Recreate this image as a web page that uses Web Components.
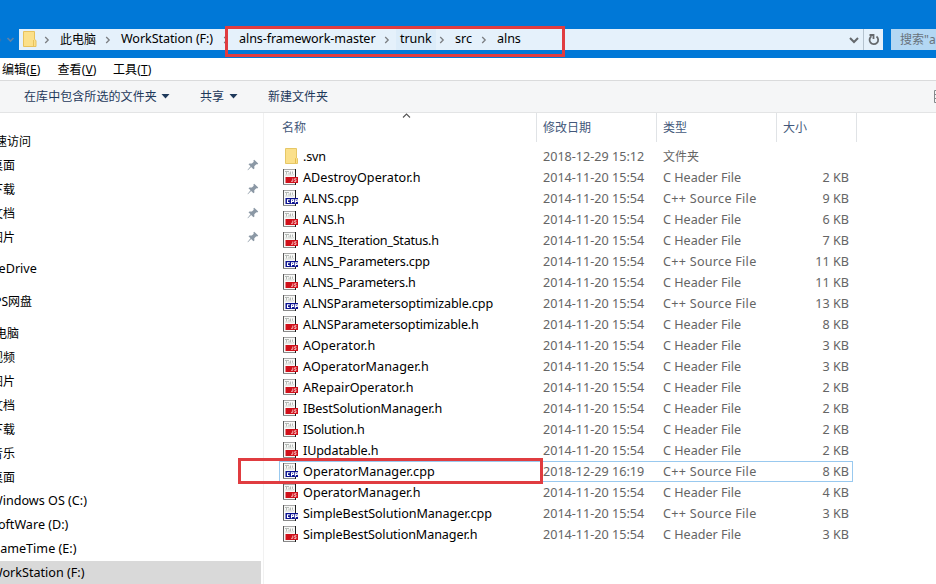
<!DOCTYPE html>
<html lang="zh-CN">
<head>
<meta charset="utf-8">
<title>alns</title>
<style>
  body {
    margin: 0;
    overflow: hidden;
    background: #fff;
    font-family: "Noto Sans", "Noto Sans CJK SC", sans-serif;
    font-size: 12px;
    color: #000;
  }
</style>
</head>
<body>
<explorer-window></explorer-window>

<script>
  // components/AddressBar.js
  class AddressBar extends HTMLElement {
    constructor() {
      super();
      this.attachShadow({ mode: "open" });
    }

    connectedCallback() {
      // [label, cell width up to the next chevron, style class]
      const crumbs = [
        ["此电脑", 61, "cjk"],
        ["WorkStation (F:)", 118, "tight"],
        ["alns-framework-master", 161, "tight"],
        ["trunk", 55, "tight hot"],
        ["src", 42, ""],
        ["alns", 60, "tight"],
      ];
      const chevron = `<svg class="chev" width="6" height="8" viewBox="0 0 6 8"><path d="M1.2 1 4.2 4 1.2 7" fill="none" stroke="#7b7e82" stroke-width="1.3"/></svg>`;

      this.shadowRoot.innerHTML = `
        <style>
          :host {
            display: flex;
            height: 58px;
            box-sizing: border-box;
            padding-top: 29px;
            background: #0078d7;
            font-size: 12.6px;
            line-height: 20px;
            white-space: nowrap;
          }
          .recent { width: 19px; height: 21px; flex: none; }
          .bar {
            display: flex;
            width: 864px;
            height: 21px;
            flex: none;
            background: #e5f1fb;
          }
          .folder { width: 25px; flex: none; padding-left: 4px; box-sizing: border-box; }
          .crumb { display: flex; flex: none; }
          .chev { margin: 7px 10px 0 0; flex: none; }
          .cjk { font-size: 12px; line-height: 21px; }
          .tight { letter-spacing: -0.09px; }
          .hot { background: #dcecf9; box-shadow: -4px 0 #dcecf9, 4px 0 #dcecf9; height: 21px; }
          .spacer { flex: 1; }
          .drop { width: 19px; }
          .refresh { width: 19px; border-left: 1px solid #b5c3cf; }
          .search {
            flex: 1;
            height: 21px;
            margin-left: 8px;
            padding-left: 9px;
            background: #b3d7f3;
            color: #68727b;
            font-size: 12px;
            line-height: 21px;
            overflow: hidden;
          }
          svg { display: block; }
        </style>
        <svg class="recent" viewBox="0 0 19 21"><path d="M0 9v4l1.5-2z" fill="#2d73b5"/><path d="M7.5 9 10.5 12 13.5 9" fill="none" stroke="#5f83a8" stroke-width="1.6"/></svg>
        <div class="bar">
          <div class="folder">
            <svg width="14" height="20" viewBox="0 0 14 20"><path d="M.5 2.500h11v8l1.500 1v6H.5z" fill="#fbe08a" stroke="#e8c25c"/><path d="M10.500 17v-6" stroke="#e8c25c"/></svg>
          </div>
          ${crumbs
            .map(
              ([label, width, kind]) =>
                `<div class="crumb" style="width:${width}px">${chevron}<span class="${kind}">${label}</span></div>`
            )
            .join("")}
          <div class="spacer"></div>
          <svg class="drop" height="21" viewBox="0 0 19 21"><path d="M6 9 10 13 14 9" fill="none" stroke="#65696d" stroke-width="2"/></svg>
          <svg class="refresh" height="21" viewBox="0 0 19 21"><path d="M7.500 7.300A4.300 4.300 0 1 0 12.500 7.500M5.500 6h4v4" fill="none" stroke="#65696d" stroke-width="1.800"/></svg>
        </div>
        <div class="search">搜索"alns"</div>
      `;
    }
  }

  // components/MenuBar.js
  class MenuBar extends HTMLElement {
    constructor() {
      super();
      this.attachShadow({ mode: "open" });
    }

    connectedCallback() {
      this.shadowRoot.innerHTML = `
        <style>
          :host {
            display: flex;
            height: 22px;
            padding-left: 2px;
            border-bottom: 1px solid #dadbdc;
            line-height: 24px;
          }
          div { width: 55.5px; white-space: nowrap; letter-spacing: 0.1px; }
        </style>
        <div>编辑(<u>E</u>)</div>
        <div>查看(<u>V</u>)</div>
        <div>工具(<u>T</u>)</div>
      `;
    }
  }

  // components/CommandBar.js
  class CommandBar extends HTMLElement {
    constructor() {
      super();
      this.attachShadow({ mode: "open" });
    }

    connectedCallback() {
      const arrow = `<svg width="9" height="5" viewBox="0 0 9 5"><path d="M.5 0h8L4.500 4.500z" fill="#1e395b"/></svg>`;

      this.shadowRoot.innerHTML = `
        <style>
          :host {
            display: flex;
            align-items: center;
            height: 31px;
            padding-left: 24px;
            background: #f5f6f7;
            border-bottom: 1px solid #e3e4e5;
            color: #1e395b;
            line-height: 32px;
            white-space: nowrap;
          }
          div { display: flex; align-items: center; gap: 4px; height: 31px; }
          .library { width: 176px; letter-spacing: 0.07px; }
          .share { width: 68px; gap: 5px; }
          .view { margin-left: auto; width: 2px; }
        </style>
        <div class="library">在库中包含所选的文件夹${arrow}</div>
        <div class="share">共享${arrow}</div>
        <div>新建文件夹</div>
        <svg class="view" height="14" viewBox="0 0 2 14"><path d="M2 .5H.5v12H2M0 4.500h2M0 8.500h2" fill="none" stroke="#85888b"/></svg>
      `;
    }
  }

  // components/NavItem.js
  class NavItem extends HTMLElement {
    constructor() {
      super();
      this.attachShadow({ mode: "open" });
    }

    connectedCallback() {
      const pin = `<svg width="12" height="12" viewBox="0 0 12 12"><path d="M7.200.8 11.200 4.600 10.200 5.500 9.300 5.200 7.300 7.200 7.400 9.500 6.500 10.300 4.100 8 .9 11.300.5 11 3.500 7.300 1.500 5.200 2.500 4.400 4.900 4.600 6.800 2.700 6.300 1.700z" fill="#8b98a5"/></svg>`;

      this.shadowRoot.innerHTML = `
        <style>
          :host {
            display: flex;
            justify-content: space-between;
            align-items: center;
            width: 261px;
            height: 24px;
            box-sizing: border-box;
            padding-right: 2px;
            white-space: nowrap;
            line-height: 25px;
          }
          :host([selected]) { background: #d9d9d9; }
          :host([gap]) { margin-top: 8px; }
          :host([latin]) { font-size: 12.6px; line-height: 24px; }
          .label { margin-left: -17px; height: 24px; }
          :host([latin]) .label { margin-left: -19px; }
          :host([child]) .label { margin-left: -9px; }
        </style>
        <span class="label"><slot></slot></span>
        ${this.hasAttribute("pinned") ? pin : ""}
      `;
    }
  }

  // components/NavPane.js
  class NavPane extends HTMLElement {
    constructor() {
      super();
      this.attachShadow({ mode: "open" });
    }

    connectedCallback() {
      this.shadowRoot.innerHTML = `
        <style>
          :host {
            display: block;
            width: 263px;
            flex: none;
            padding-top: 16px;
            border-right: 1px solid #f1f1f1;
            overflow: hidden;
          }
        </style>
        <nav-item>快速访问</nav-item>
        <nav-item child pinned>桌面</nav-item>
        <nav-item child pinned>下载</nav-item>
        <nav-item child pinned>文档</nav-item>
        <nav-item child pinned>图片</nav-item>
        <nav-item gap latin>OneDrive</nav-item>
        <nav-item gap>WPS网盘</nav-item>
        <nav-item gap>此电脑</nav-item>
        <nav-item child>视频</nav-item>
        <nav-item child>图片</nav-item>
        <nav-item child>文档</nav-item>
        <nav-item child>下载</nav-item>
        <nav-item child>音乐</nav-item>
        <nav-item child>桌面</nav-item>
        <nav-item child latin>Windows OS (C:)</nav-item>
        <nav-item child latin>SoftWare (D:)</nav-item>
        <nav-item child latin>GameTime (E:)</nav-item>
        <nav-item child latin selected>WorkStation (F:)</nav-item>
      `;
    }
  }

  // components/FileIcon.js
  class FileIcon extends HTMLElement {
    constructor() {
      super();
      this.attachShadow({ mode: "open" });
    }

    connectedCallback() {
      const kind = this.getAttribute("kind");
      const badge =
        kind === "cpp"
          ? `<path d="M2.500 8H15v6H2.500z" fill="#0b1190"/><path d="M6.800 9.700H4.500v2.800h2M8.500 13.200V9.700h2v1.800h-2M12.300 13.200V9.700h2v1.800h-2" fill="none" stroke="#fff" stroke-width="1.100"/>`
          : `<path d="M2.500 8H15v6H2.500z" fill="#d0101a"/><path d="M9.800 9.500v2.800H8M13.500 9.700h-1.800v1.300h1.300v1.500h-1.800" fill="none" stroke="#f6c3c3" stroke-width=".9"/>`;
      const page = `
        <path d="M0 0h13v16H0z" fill="#f8f8f7"/>
        <path d="M0 .5h13" stroke="#a9a9a9"/>
        <path d="M.5 0v16" stroke="#5c5c5c"/>
        <path d="M0 15.500h13" stroke="#8a8a8a"/>
        <path d="M12.500 0v8M12.500 14v2" stroke="#1c1c1c"/>
        <path d="M2 2.500h4M3.500 3v2.500M6 3.500v2M7.500 2.500v3M9.500 2.500v2l1 1" fill="none" stroke="#a3aaa5" stroke-width=".8"/>
        <path d="M2 6h8.500" stroke="#ccd0cc" stroke-width=".8"/>
        ${badge}`;
      const folder = `
        <path d="M2.500.500h11v9l1 1v5h-12z" fill="#fbe08a" stroke="#e6c766"/>
        <path d="M12.500 15v-4.500l1-1" fill="none" stroke="#e6bd4e"/>`;

      this.shadowRoot.innerHTML = `
        <style>
          :host { display: block; width: 16px; height: 16px; margin-bottom: 1px; }
          svg { display: block; }
        </style>
        <svg width="16" height="16" viewBox="0 0 16 16">${kind === "folder" ? folder : page}</svg>
      `;
    }
  }

  // components/FileRow.js
  class FileRow extends HTMLElement {
    constructor() {
      super();
      this.attachShadow({ mode: "open" });
    }

    connectedCallback() {
      this.shadowRoot.innerHTML = `
        <style>
          :host {
            display: grid;
            grid-template-columns: 20px 240px 120px 120px 66px;
            align-items: center;
            width: 574px;
            height: 21px;
            margin-left: 15px;
            padding-left: 4px;
            box-sizing: border-box;
            font-size: 12.6px;
            line-height: 21px;
            white-space: nowrap;
            color: #656565;
          }
          :host([focused]) { box-shadow: inset 0 0 0 1px #99c9ef; }
          .name { color: #000; letter-spacing: ${this.getAttribute("tracking")}px; }
          .size { text-align: right; }
          .type-folder { font-size: 12px; }
          .type-cpp { letter-spacing: 0.27px; }
        </style>
        <file-icon kind="${this.getAttribute("kind")}"></file-icon>
        <span class="name"><slot></slot></span>
        <span class="date">${this.getAttribute("date")}</span>
        <span class="type-${this.getAttribute("kind")}">${this.getAttribute("type")}</span>
        <span class="size">${this.getAttribute("size")}</span>
      `;
    }
  }

  // components/FileList.js
  class FileList extends HTMLElement {
    constructor() {
      super();
      this.attachShadow({ mode: "open" });
    }

    connectedCallback() {
      // [name, size, letter spacing of the name]
      const files = [
        [".svn", "", -0.2],
        ["ADestroyOperator.h", "2 KB", 0.04],
        ["ALNS.cpp", "9 KB", 0],
        ["ALNS.h", "6 KB", -0.1],
        ["ALNS_Iteration_Status.h", "7 KB", -0.25],
        ["ALNS_Parameters.cpp", "11 KB", -0.17],
        ["ALNS_Parameters.h", "11 KB", -0.22],
        ["ALNSParametersoptimizable.cpp", "13 KB", -0.13],
        ["ALNSParametersoptimizable.h", "8 KB", -0.16],
        ["AOperator.h", "3 KB", 0.12],
        ["AOperatorManager.h", "3 KB", 0.08],
        ["ARepairOperator.h", "2 KB", 0.06],
        ["IBestSolutionManager.h", "2 KB", -0.1],
        ["ISolution.h", "2 KB", -0.25],
        ["IUpdatable.h", "2 KB", -0.12],
        ["OperatorManager.cpp", "8 KB", 0.08],
        ["OperatorManager.h", "4 KB", 0.06],
        ["SimpleBestSolutionManager.cpp", "3 KB", -0.07],
        ["SimpleBestSolutionManager.h", "3 KB", -0.1],
      ];
      const types = { folder: "文件夹", cpp: "C++ Source File", h: "C Header File" };
      const dates = {
        ".svn": "2018-12-29 15:12",
        "OperatorManager.cpp": "2018-12-29 16:19",
      };

      const rows = files.map(([name, size, tracking]) => {
        const kind = name === ".svn" ? "folder" : name.split(".").pop();
        const focused = name === "OperatorManager.cpp" ? "focused" : "";
        const date = dates[name] || "2014-11-20 15:54";
        return `<file-row kind="${kind}" date="${date}" type="${types[kind]}" size="${size}" tracking="${tracking}" ${focused}>${name}</file-row>`;
      });

      this.shadowRoot.innerHTML = `
        <style>
          :host { display: block; flex: 1; }
          .head {
            display: grid;
            grid-template-columns: 273px 120px 120px 80px;
            height: 27px;
            margin-bottom: 6px;
            color: #43587a;
            line-height: 29px;
          }
          .head div {
            position: relative;
            border-right: 1px solid #e0e3e6;
            padding-left: 6px;
          }
          .head div:first-child { padding-left: 18px; }
          .head svg { position: absolute; left: 138px; top: 0; }
        </style>
        <div class="head">
          <div>名称<svg width="9" height="5" viewBox="0 0 9 5"><path d="M1 4.500 4.500 1 8 4.500" fill="none" stroke="#555" stroke-width="1.100"/></svg></div>
          <div>修改日期</div>
          <div>类型</div>
          <div>大小</div>
        </div>
        ${rows.join("")}
      `;
    }
  }

  // components/MarkBox.js
  class MarkBox extends HTMLElement {
    constructor() {
      super();
      this.attachShadow({ mode: "open" });
    }

    connectedCallback() {
      this.shadowRoot.innerHTML = `
        <style>
          :host {
            display: block;
            position: absolute;
            box-sizing: border-box;
            border: 3px solid #e03c40;
          }
        </style>
      `;
    }
  }

  // components/ExplorerWindow.js
  class ExplorerWindow extends HTMLElement {
    constructor() {
      super();
      this.attachShadow({ mode: "open" });
    }

    connectedCallback() {
      this.shadowRoot.innerHTML = `
        <style>
          :host {
            display: flex;
            flex-direction: column;
            position: relative;
            width: 936px;
            height: 584px;
            overflow: hidden;
          }
          address-bar, menu-bar, command-bar { flex: none; }
          .content { display: flex; flex: 1; min-height: 0; }
          .path { left: 225px; top: 26px; width: 340px; height: 31px; }
          .file { left: 238px; top: 458px; width: 305px; height: 26px; }
        </style>
        <address-bar></address-bar>
        <menu-bar></menu-bar>
        <command-bar></command-bar>
        <div class="content">
          <nav-pane></nav-pane>
          <file-list></file-list>
        </div>
        <mark-box class="path"></mark-box>
        <mark-box class="file"></mark-box>
      `;
    }
  }

  customElements.define("address-bar", AddressBar);
  customElements.define("menu-bar", MenuBar);
  customElements.define("command-bar", CommandBar);
  customElements.define("nav-item", NavItem);
  customElements.define("nav-pane", NavPane);
  customElements.define("file-icon", FileIcon);
  customElements.define("file-row", FileRow);
  customElements.define("file-list", FileList);
  customElements.define("mark-box", MarkBox);
  customElements.define("explorer-window", ExplorerWindow);
</script>
</body>
</html>
